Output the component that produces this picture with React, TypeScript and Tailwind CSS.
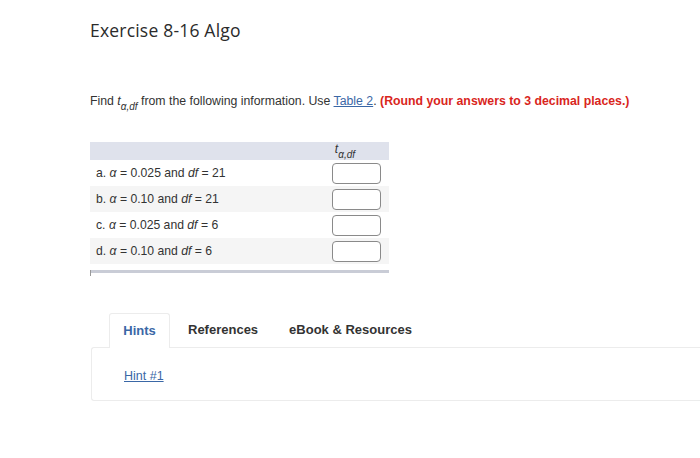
const rows = [
  { label: "a.", alpha: "0.025", df: "21" },
  { label: "b.", alpha: "0.10", df: "21" },
  { label: "c.", alpha: "0.025", df: "6" },
  { label: "d.", alpha: "0.10", df: "6" },
];

function TSub() {
  return (
    <span className="italic">
      t<sub className="text-[10px] align-[-2px]">α,df</sub>
    </span>
  );
}

export default function App() {
  return (
    <div className="w-[700px] h-[458px] bg-white text-[#333] font-['Liberation_Sans',Arial,sans-serif] overflow-hidden">
      <div className="pl-[90px] pt-[19px]">
        <h1 className="font-['Open_Sans',sans-serif] text-[17.5px] leading-[22px] text-[#2b2b2b] tracking-[0.2px]">
          Exercise 8-16 Algo
        </h1>
      </div>

      <p className="pl-[90px] mt-[51px] text-[12.3px] leading-[18px] text-[#333]">
        Find <TSub /> from the following information. Use{" "}
        <a className="text-[#3a67a6] underline">Table 2</a>.{" "}
        <span className="font-bold text-[#d9261c]">(Round your answers to 3 decimal places.)</span>
      </p>

      <div className="ml-[90px] mt-[32px] w-[299px]">
        <div className="h-[18px] bg-[#dfe2ec] flex justify-end pr-[34px] text-[12px] text-[#333]">
          <span className="-mt-[2px]">
            <TSub />
          </span>
        </div>
        {rows.map((r, i) => (
          <div
            key={r.label}
            className={`h-[26px] flex items-center justify-between pl-[6px] pr-[8px] text-[12.2px] ${i % 2 === 1 ? "bg-[#f5f5f5]" : "bg-white"}`}
          >
            <span>
              {r.label} <span className="italic">α</span> = {r.alpha} and <span className="italic">df</span> = {r.df}
            </span>
            <input
              type="text"
              className="w-[49px] h-[21px] rounded-[4px] border border-[#8a8a8a] bg-white"
            />
          </div>
        ))}
        <div className="mt-[6px] h-[3px] bg-[#c9ccd6] border-l border-[#888] relative">
          <div className="absolute left-[-1px] top-0 w-px h-[6px] bg-[#999]" />
        </div>
      </div>

      <div className="ml-[91px] mt-[39px]">
        <div className="flex items-end">
          <div className="ml-[18px] w-[61px] h-[35px] border border-b-0 border-[#ececec] rounded-t-[3px] bg-white flex items-center justify-center text-[13px] font-bold text-[#3a67a6] relative top-px">
            Hints
          </div>
          <div className="ml-[18px] h-[35px] flex items-center text-[13px] font-bold text-[#333]">References</div>
          <div className="ml-[31px] h-[35px] flex items-center text-[13px] font-bold text-[#333]">eBook &amp; Resources</div>
        </div>
        <div className="h-[54px] border border-r-0 border-[#ececec] rounded-l-[3px] pl-[32px] pt-[15px]">
          <a className="text-[12.5px] text-[#3a67a6] underline">Hint #1</a>
        </div>
      </div>
    </div>
  );
}
